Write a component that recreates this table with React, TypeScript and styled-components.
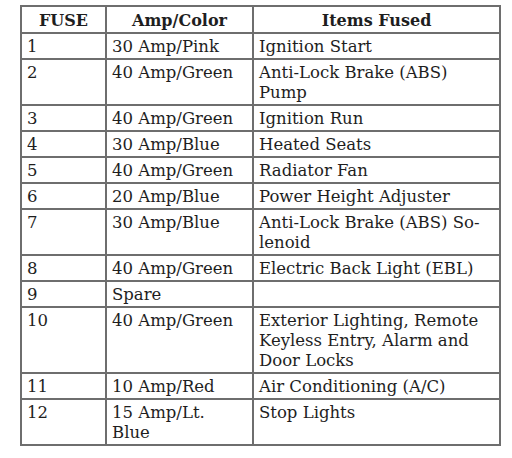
import styled, { createGlobalStyle } from "styled-components";
import React from "react";

const GlobalStyle = createGlobalStyle`
    body {
        margin: 0;
        background: #fff;
    }
`;

const Page = styled.div`
    padding: 5px 0 0 20px;
    font-family: "DejaVu Serif", "Liberation Serif", serif;
    color: #1e1e1e;
`;

const Table = styled.table`
    width: 479px;
    border-collapse: collapse;
    table-layout: fixed;
    border: 2px solid #6e6e6e;
`;

const Th = styled.th`
    border: 2px solid #6e6e6e;
    font-weight: bold;
    font-size: 16px;
    line-height: 19px;
    padding: 4px 4px 2px;
    text-align: center;
`;

const Td = styled.td`
    border: 2px solid #6e6e6e;
    font-size: 16.5px;
    line-height: 20px;
    padding: 3px 4px 1px 5px;
    vertical-align: top;
    text-align: left;
`;

interface Fuse {
    fuse: string;
    amp: React.ReactNode;
    items: React.ReactNode;
}

const fuses: Fuse[] = [
    { fuse: "1", amp: "30 Amp/Pink", items: "Ignition Start" },
    { fuse: "2", amp: "40 Amp/Green", items: <>Anti-Lock Brake (ABS)<br />Pump</> },
    { fuse: "3", amp: "40 Amp/Green", items: "Ignition Run" },
    { fuse: "4", amp: "30 Amp/Blue", items: "Heated Seats" },
    { fuse: "5", amp: "40 Amp/Green", items: "Radiator Fan" },
    { fuse: "6", amp: "20 Amp/Blue", items: "Power Height Adjuster" },
    { fuse: "7", amp: "30 Amp/Blue", items: <>Anti-Lock Brake (ABS) So-<br />lenoid</> },
    { fuse: "8", amp: "40 Amp/Green", items: "Electric Back Light (EBL)" },
    { fuse: "9", amp: "Spare", items: "" },
    {
        fuse: "10",
        amp: "40 Amp/Green",
        items: <>Exterior Lighting, Remote<br />Keyless Entry, Alarm and<br />Door Locks</>
    },
    { fuse: "11", amp: "10 Amp/Red", items: "Air Conditioning (A/C)" },
    { fuse: "12", amp: <>15 Amp/Lt.<br />Blue</>, items: "Stop Lights" },
];

const App: React.FC = () => {
    return (
        <Page>
            <GlobalStyle />
            <Table>
                <colgroup>
                    <col style={{ width: 85 }} />
                    <col style={{ width: 147 }} />
                    <col style={{ width: 247 }} />
                </colgroup>
                <thead>
                    <tr>
                        <Th>FUSE</Th>
                        <Th>Amp/Color</Th>
                        <Th>Items Fused</Th>
                    </tr>
                </thead>
                <tbody>
                    {fuses.map((f) => (
                        <tr key={f.fuse}>
                            <Td>{f.fuse}</Td>
                            <Td>{f.amp}</Td>
                            <Td>{f.items}</Td>
                        </tr>
                    ))}
                </tbody>
            </Table>
        </Page>
    );
}

export default App;
